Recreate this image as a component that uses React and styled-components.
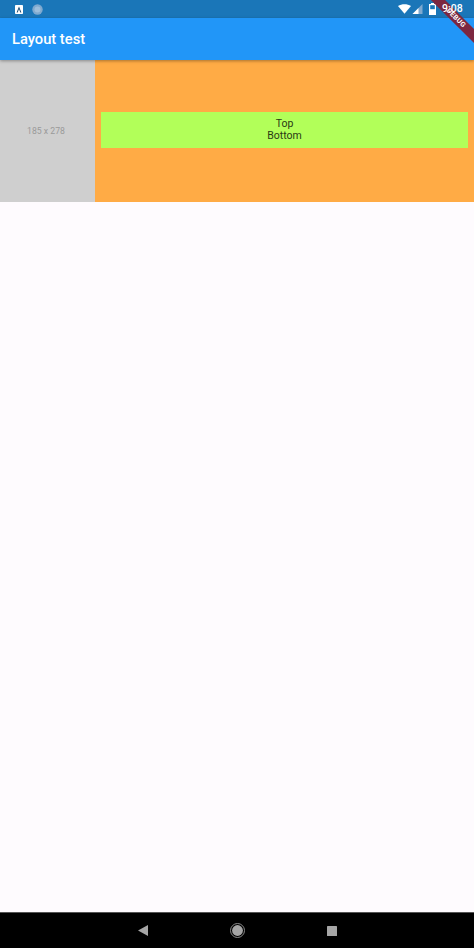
import React from 'react'
import styled, { createGlobalStyle } from 'styled-components'

const Global = createGlobalStyle`
  html, body {
    margin: 0;
    padding: 0;
    background: #fffbff;
  }
  * {
    box-sizing: border-box;
  }
`;

const Screen = styled.div`
  width: 474px;
  height: 948px;
  display: flex;
  flex-direction: column;
  position: relative;
  overflow: hidden;
  background: #fefbfe;
  font-family: Roboto, "Liberation Sans", sans-serif;
`;

const StatusBar = styled.div`
  height: 18px;
  flex: none;
  display: flex;
  align-items: center;
  justify-content: space-between;
  padding: 0 12px 0 15px;
  background: #1a76b8;
`;

const StatusGroup = styled.div`
  display: flex;
  align-items: center;
  gap: ${(p) => p.$gap}px;
`;

const Battery = styled.svg`
  margin-left: 5px;
`;

const Clock = styled.span`
  position: relative;
  z-index: 3;
  width: 20px;
  margin-left: 5px;
  color: #fff;
  font-size: 10.5px;
  font-weight: 500;
  line-height: 18px;
  white-space: nowrap;
`;

const AppBar = styled.header`
  height: 42px;
  flex: none;
  display: flex;
  align-items: center;
  padding: 0 12px;
  background: #2196f8;
  box-shadow: 0 1px 3px rgba(0, 0, 0, 0.35);
  position: relative;
  z-index: 1;
`;

const Title = styled.h1`
  margin: 0;
  color: #fff;
  font-size: 14.7px;
  font-weight: 500;
`;

const Row = styled.section`
  height: 142px;
  flex: none;
  display: flex;
  background: #ffab45;
`;

const Placeholder = styled.div`
  width: 95px;
  flex: none;
  display: flex;
  align-items: center;
  justify-content: center;
  padding-right: 3px;
  background: #cfcfcf;
  color: #9a9a9a;
  font-size: 8.7px;
`;

const Content = styled.div`
  flex: 1;
  display: flex;
  align-items: center;
  padding: 0 6px 2px;
`;

const Band = styled.div`
  width: 100%;
  height: 36px;
  display: flex;
  flex-direction: column;
  align-items: center;
  justify-content: center;
  background: #b2ff59;
  color: #2a3a14;
  font-size: 10.5px;
  line-height: 12px;
`;

const Body = styled.main`
  flex: 1;
`;

const NavBar = styled.nav`
  height: 36px;
  flex: none;
  display: flex;
  align-items: center;
  justify-content: center;
  gap: 82px;
  background: #000;
  border-top: 1px solid #555;
`;

const Ribbon = styled.div`
  position: absolute;
  top: 13px;
  right: -13px;
  width: 62px;
  height: 10px;
  display: flex;
  align-items: center;
  justify-content: center;
  transform: rotate(45deg);
  background: #7c2740;
  color: #fff;
  font-size: 7px;
  font-weight: 700;
  letter-spacing: 0.3px;
  z-index: 2;
`;

const App = () => {
  return (
    <Screen>
      <Global />
      <StatusBar>
        <StatusGroup $gap={9}>
          <svg width="8" height="9" viewBox="0 0 8 9">
            <rect width="8" height="9" rx="0.8" fill="#fff" />
            <path d="M1.6 7.5 4 1.5 6.4 7.5H5.3L4 4 2.7 7.5Z" fill="#1a4a70" />
          </svg>
          <svg width="11" height="11" viewBox="0 0 11 11">
            <circle cx="5.5" cy="5.5" r="5.2" fill="#7fa9cf" />
            <circle cx="5.5" cy="5.5" r="3" fill="#9dbedb" />
          </svg>
        </StatusGroup>
        <StatusGroup $gap={1}>
          <svg width="13" height="10" viewBox="0 0 14 10">
            <path d="M0 1.8C4 -0.6 10 -0.6 14 1.8L7 10Z" fill="#fff" />
          </svg>
          <svg width="11" height="10" viewBox="0 0 10 10">
            <path d="M10 0V10H0Z" fill="#7fa9cf" />
            <path d="M6 4V10H0Z" fill="#fff" />
          </svg>
          <Battery width="7" height="12" viewBox="0 0 7 12">
            <path d="M2 0H5V1H7V12H0V1H2Z" fill="#fff" />
            <rect x="1.2" y="2.2" width="4.6" height="4" fill="#1a76b8" />
          </Battery>
          <Clock>9:08</Clock>
        </StatusGroup>
      </StatusBar>
      <AppBar>
        <Title>Layout test</Title>
      </AppBar>
      <Row>
        <Placeholder>185 x 278</Placeholder>
        <Content>
          <Band>
            <span>Top</span>
            <span>Bottom</span>
          </Band>
        </Content>
      </Row>
      <Body />
      <NavBar>
        <svg width="10" height="11" viewBox="0 0 10 11">
          <path d="M10 0V11L0 5.5Z" fill="#a6a6a6" />
        </svg>
        <svg width="15" height="15" viewBox="0 0 15 15">
          <circle cx="7.5" cy="7.5" r="7" fill="none" stroke="#8a8a8a" strokeWidth="1" />
          <circle cx="7.5" cy="7.5" r="5.4" fill="#a6a6a6" />
        </svg>
        <svg width="10" height="10" viewBox="0 0 10 10">
          <rect width="10" height="10" rx="0.6" fill="#a6a6a6" />
        </svg>
      </NavBar>
      <Ribbon>DEBUG</Ribbon>
    </Screen>
  )
}

export default App
